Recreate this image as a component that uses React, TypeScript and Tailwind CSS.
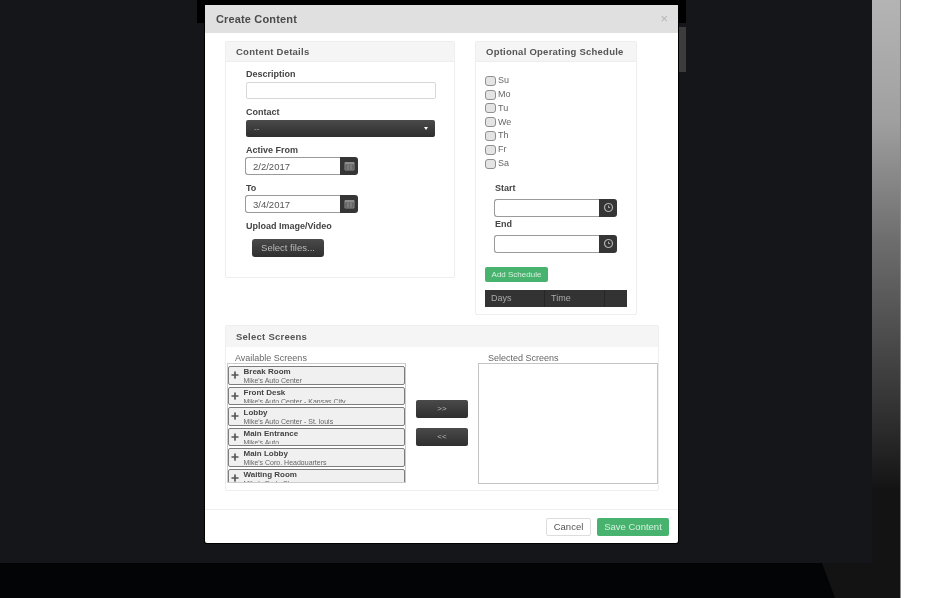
import React from 'react';
import { Plus } from 'lucide-react';

const screens = [
  { name: 'Break Room', site: "Mike's Auto Center" },
  { name: 'Front Desk', site: "Mike's Auto Center - Kansas City" },
  { name: 'Lobby', site: "Mike's Auto Center - St. louis" },
  { name: 'Main Entrance', site: "Mike's Auto" },
  { name: 'Main Lobby', site: "Mike's Corp. Headquarters" },
  { name: 'Waiting Room', site: "Mike's Body Shop" },
];

const days = ['Su', 'Mo', 'Tu', 'We', 'Th', 'Fr', 'Sa'];

const PanelHeader = ({ title }: { title: string }) => (
  <div className="h-[20px] bg-[#f5f5f5] border-b border-[#eeeeee] pl-[10px] text-[9.5px] leading-[20px] font-bold text-[#555555] tracking-[0.25px] whitespace-nowrap">
    {title}
  </div>
);

const FieldLabel = ({ children }: { children: React.ReactNode }) => (
  <div className="h-[12px] text-[9px] leading-[12px] font-bold text-[#444444] whitespace-nowrap">{children}</div>
);

const CalendarGlyph = () => (
  <svg width="11" height="10" viewBox="0 0 11 10">
    <rect x="0.5" y="1" width="10" height="8.5" rx="1" fill="#8d8d8d" />
    <rect x="1.5" y="3.5" width="8" height="5" fill="#4a4a4a" />
    <path d="M2 5h7M2 7h7M4 3.5v5M7 3.5v5" stroke="#a0a0a0" strokeWidth="0.7" />
  </svg>
);

const ClockGlyph = () => (
  <svg width="11" height="11" viewBox="0 0 11 11" fill="none">
    <circle cx="5.5" cy="5.5" r="4" stroke="#b0b0b0" strokeWidth="1.2" />
    <path d="M5.5 3.6v2h1.6" stroke="#b0b0b0" strokeWidth="1" />
  </svg>
);

const AddonInput = ({ value, width, icon }: { value?: string; width: string; icon: React.ReactNode }) => (
  <div className="flex h-[18px] -ml-[1px]">
    <div className={`${width} border border-[#9a9a9a] border-r-0 rounded-l-[3px] bg-white pl-[7px] text-[9.5px] leading-[17px] text-[#555555]`}>
      {value}
    </div>
    <div className="w-[18px] bg-[#353535] rounded-r-[3px] flex items-center justify-center">{icon}</div>
  </div>
);

const DarkButton = ({ children }: { children: React.ReactNode }) => (
  <div className="w-[52px] h-[18px] rounded-[2px] bg-gradient-to-b from-[#4a4a4a] to-[#2f2f2f] text-[#bbbbbb] text-[8px] leading-[18px] text-center">
    {children}
  </div>
);

export default function App() {
  return (
    <div className="relative w-[928px] h-[598px] overflow-hidden flex bg-white font-['Liberation_Sans',Arial,sans-serif]">
      {/* page behind the dialog */}
      <div className="relative w-[872px] flex flex-col">
        <div className="h-[563px] bg-[#15161a]" />
        <div className="flex-1 bg-[#131313]">
          <div className="h-full bg-[#030406] [clip-path:polygon(0_0,822px_0,835px_100%,0_100%)]" />
        </div>
        <div className="absolute left-[197px] top-0 w-[489px] h-[23px] bg-black" />
        <div className="absolute left-[679px] top-[27px] w-[7px] h-[45px] bg-[#3c3c3c]" />
      </div>
      <div className="w-[29px] border-r border-[#8a8a8a] bg-[linear-gradient(to_bottom,#b4b4b4_0%,#a0a0a0_20%,#6e6e6e_40%,#444444_60%,#242424_75%,#131313_82%,#131313_100%)]" />

      {/* dialog */}
      <div className="absolute left-[205px] top-[5px] w-[473px] h-[538px] bg-white rounded-[2px] shadow-[0_0_0_1px_#000000] flex flex-col blur-[0.5px]">
        <div className="h-[28px] shrink-0 bg-[#e0e0e0] flex items-center justify-between pl-[11px] pr-[10px]">
          <span className="text-[11px] font-bold text-[#4a4a4a] tracking-[0.15px]">Create Content</span>
          <span className="text-[13px] text-[#b5b5b5]">×</span>
        </div>

        <div className="flex-1 pl-[20px] pt-[8px]">
          <div className="flex items-start gap-[20px]">
            {/* content details */}
            <div className="w-[230px] h-[237px] border border-[#eeeeee] rounded-[2px]">
              <PanelHeader title="Content Details" />
              <div className="pl-[20px] pt-[6px] flex flex-col">
                <FieldLabel>Description</FieldLabel>
                <div className="w-[190px] h-[17px] mt-[2px] border border-[#d8d8d8] rounded-[2px] bg-white" />
                <div className="mt-[7px]"><FieldLabel>Contact</FieldLabel></div>
                <div className="w-[189px] h-[17px] mt-[2px] rounded-[2px] bg-gradient-to-b from-[#4a4a4a] to-[#2e2e2e] flex items-center justify-between pl-[8px] pr-[7px] text-[8px] text-[#aaaaaa]">
                  <span>--</span>
                  <span className="border-x-[2.5px] border-x-transparent border-t-[3.5px] border-t-white" />
                </div>
                <div className="mt-[7px]"><FieldLabel>Active From</FieldLabel></div>
                <div className="mt-[1px]"><AddonInput value="2/2/2017" width="w-[95px]" icon={<CalendarGlyph />} /></div>
                <div className="mt-[7px]"><FieldLabel>To</FieldLabel></div>
                <div className="mt-[1px]"><AddonInput value="3/4/2017" width="w-[95px]" icon={<CalendarGlyph />} /></div>
                <div className="mt-[7px]"><FieldLabel>Upload Image/Video</FieldLabel></div>
                <div className="ml-[6px] mt-[7px] w-[72px] h-[18px] rounded-[3px] bg-gradient-to-b from-[#4a4a4a] to-[#2f2f2f] text-[#bbbbbb] text-[9.5px] leading-[18px] text-center">
                  Select files...
                </div>
              </div>
            </div>

            {/* schedule */}
            <div className="w-[162px] h-[274px] border border-[#eeeeee] rounded-[2px]">
              <PanelHeader title="Optional Operating Schedule" />
              <div className="pl-[9px] pt-[12px] flex flex-col">
                {days.map((d) => (
                  <div key={d} className="h-[13.8px] flex items-center gap-[2px]">
                    <span className="w-[11px] h-[10px] rounded-[3px] border border-[#8f8f8f] bg-[#e4e4e4]" />
                    <span className="text-[9px] text-[#666666]">{d}</span>
                  </div>
                ))}
                <div className="pl-[10px] mt-[11px]">
                  <FieldLabel>Start</FieldLabel>
                  <div className="mt-[5px]"><AddonInput width="w-[105px]" icon={<ClockGlyph />} /></div>
                  <div className="mt-[1px]"><FieldLabel>End</FieldLabel></div>
                  <div className="mt-[5px]"><AddonInput width="w-[105px]" icon={<ClockGlyph />} /></div>
                </div>
                <div className="mt-[14px] w-[63px] h-[15px] rounded-[2px] bg-[#48b36e] text-[#d6f0df] text-[8px] leading-[15px] text-center">
                  Add Schedule
                </div>
                <div className="mt-[8px] w-[142px] h-[17px] bg-[#333333] flex text-[9px] leading-[17px] text-[#aaaaaa]">
                  <span className="w-[60px] pl-[6px] border-r border-[#262626]">Days</span>
                  <span className="w-[60px] pl-[6px] border-r border-[#262626]">Time</span>
                </div>
              </div>
            </div>
          </div>

          {/* select screens */}
          <div className="mt-[10px] w-[434px] h-[166px] border border-[#eeeeee] rounded-[2px]">
            <div className="h-[21px] bg-[#f5f5f5] pl-[10px] text-[9.5px] leading-[21px] font-bold text-[#555555] tracking-[0.25px]">Select Screens</div>
            <div className="flex items-start pl-[1px] pt-[7px]">
              <div className="w-[180px]">
                <div className="pl-[8px] h-[9px] text-[9px] leading-[8px] text-[#666666] whitespace-nowrap">Available Screens</div>
                <div className="h-[120px] overflow-hidden border border-[#cccccc] pt-[2px] flex flex-col gap-[2px]">
                  {screens.map((s) => (
                    <div key={s.name} className="shrink-0 h-[18.5px] flex border-[1.5px] border-[#7d7d7d] rounded-[2px] bg-[#f0f0f0]">
                      <div className="w-[12px] shrink-0 flex items-center justify-center">
                        <Plus size={10} strokeWidth={4} color="#555555" />
                      </div>
                      <div className="pl-[2.5px] h-[15.5px] overflow-hidden">
                        <div className="text-[8px] leading-[9px] font-bold text-[#444444] whitespace-nowrap">{s.name}</div>
                        <div className="text-[7px] leading-[9px] text-[#666666] whitespace-nowrap">{s.site}</div>
                      </div>
                    </div>
                  ))}
                </div>
              </div>
              <div className="ml-[10px] pt-[46px] flex flex-col gap-[10px]">
                <DarkButton>&gt;&gt;</DarkButton>
                <DarkButton>&lt;&lt;</DarkButton>
              </div>
              <div className="ml-[10px] w-[181px]">
                <div className="pl-[10px] h-[9px] text-[9px] leading-[8px] text-[#666666] whitespace-nowrap">Selected Screens</div>
                <div className="h-[121px] border border-[#c4c4c4]" />
              </div>
            </div>
          </div>
        </div>

        <div className="h-[34px] shrink-0 border-t border-[#eeeeee] flex items-center justify-end gap-[6px] pr-[9px]">
          <div className="w-[45px] h-[18px] rounded-[2px] border border-[#dddddd] text-[9.5px] leading-[16px] text-center text-[#555555]">Cancel</div>
          <div className="w-[72px] h-[18px] rounded-[2px] bg-[#48b36e] text-[9.5px] leading-[18px] text-center text-[#d6f0df]">Save Content</div>
        </div>
      </div>
    </div>
  );
}
